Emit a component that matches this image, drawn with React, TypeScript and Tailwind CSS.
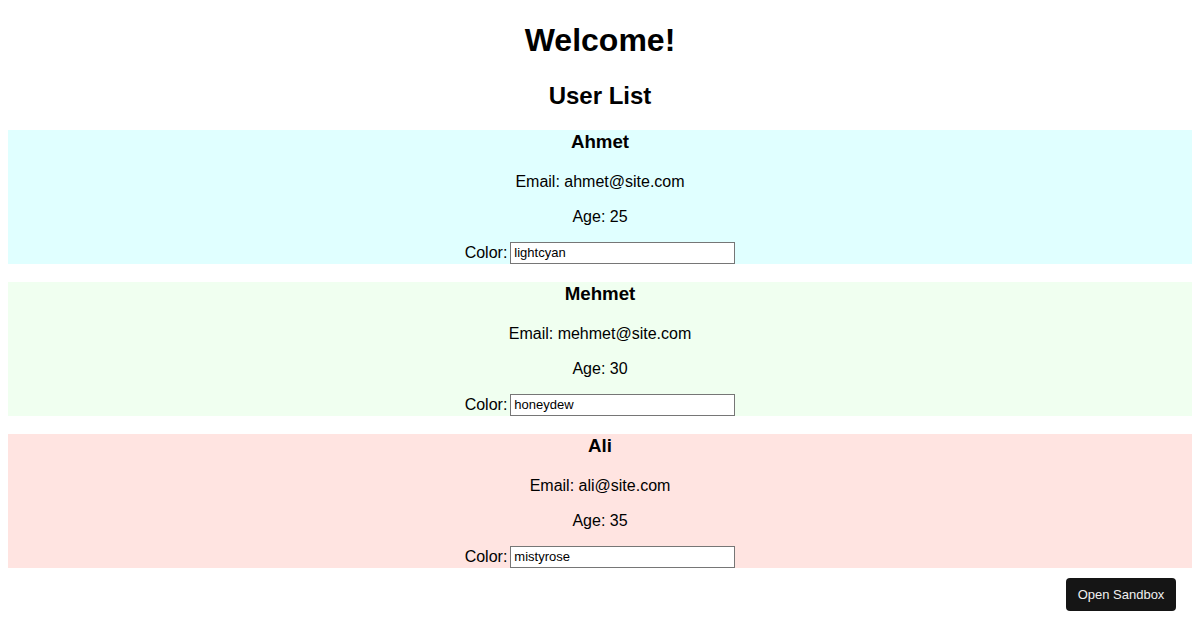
const users = [
  { name: 'Ahmet', email: 'ahmet@site.com', age: 25, color: 'lightcyan', bg: 'bg-[#e0ffff]' },
  { name: 'Mehmet', email: 'mehmet@site.com', age: 30, color: 'honeydew', bg: 'bg-[#f0fff0]' },
  { name: 'Ali', email: 'ali@site.com', age: 35, color: 'mistyrose', bg: 'bg-[#ffe4e1]' },
]

function UserCard({ user }: { user: (typeof users)[number] }) {
  return (
    <div className={`${user.bg} flex flex-col items-center text-center`}>
      <h3 className="text-[18.72px] font-bold leading-[24px]">{user.name}</h3>
      <p className="mt-[18px] text-[16px] leading-[19px]">Email: {user.email}</p>
      <p className="mt-[16px] text-[16px] leading-[19px]">Age: {user.age}</p>
      <div className="mt-[15.5px] flex h-[22px] items-center gap-[3px] text-[16px]">
        <span>Color:</span>
        <input
          readOnly
          value={user.color}
          className="h-[22px] w-[225px] border border-[#767676] bg-white px-[3px] text-[13px] text-black outline-none"
        />
      </div>
    </div>
  )
}

export default function App() {
  return (
    <div className="min-h-[630px] bg-white px-2 pb-2 text-black font-['Liberation_Sans',Arial,sans-serif]">
      <h1 className="pt-[22px] text-center text-[32px] font-bold leading-[36px]">Welcome!</h1>
      <h2 className="mt-[24px] text-center text-[24px] font-bold leading-[28px]">User List</h2>
      <div className="mt-[20px] flex flex-col gap-[18.6px]">
        {users.map((u) => (
          <UserCard key={u.name} user={u} />
        ))}
      </div>
      <button className="fixed right-[24px] top-[578px] h-[33px] w-[110px] rounded-[4px] bg-[#151515] text-[13px] text-[#f0f0f0]">
        Open Sandbox
      </button>
    </div>
  )
}
